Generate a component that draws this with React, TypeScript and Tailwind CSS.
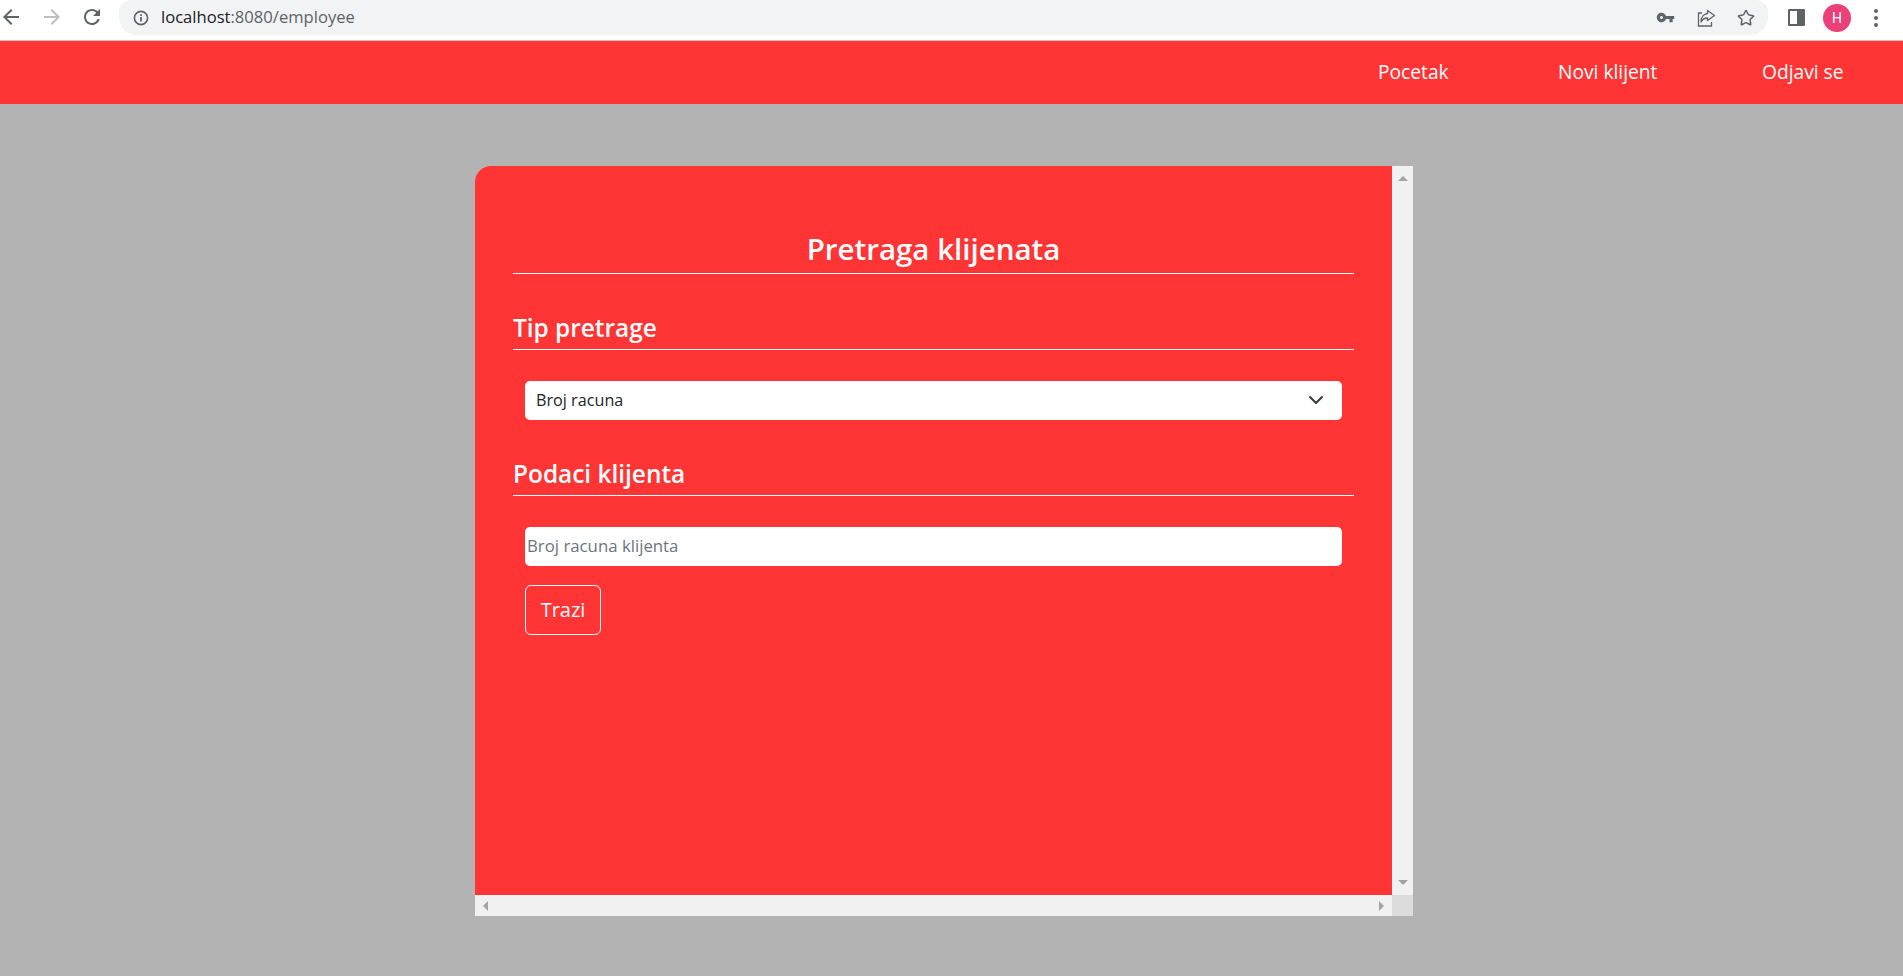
import { Star } from 'lucide-react';

const segoe = 'font-["Open_Sans","Noto_Sans",sans-serif]';

function Mat({ d, className }: { d: string; className: string }) {
  return (
    <svg viewBox="0 0 24 24" className={className} fill="currentColor">
      <path d={d} />
    </svg>
  );
}

function BrowserBar() {
  return (
    <div className="flex h-[41px] items-start border-b border-[#c4c4c4] bg-white">
      <Mat
        d="M20 11H7.83l5.59-5.59L12 4l-8 8 8 8 1.41-1.41L7.83 13H20v-2z"
        className="ml-[-1px] mt-[5px] h-6 w-6 shrink-0 text-[#5f6368]"
      />
      <Mat
        d="M4 11h12.17l-5.59-5.59L12 4l8 8-8 8-1.41-1.41L16.17 13H4v-2z"
        className="ml-[17px] mt-[5px] h-6 w-6 shrink-0 text-[#bcbec1]"
      />
      <Mat
        d="M17.65 6.35C16.2 4.9 14.21 4 12 4c-4.42 0-7.99 3.58-7.99 8s3.57 8 7.99 8c3.73 0 6.84-2.55 7.73-6h-2.08c-.82 2.33-3.04 4-5.65 4-3.31 0-6-2.69-6-6s2.69-6 6-6c1.66 0 3.14.69 4.22 1.78L13 11h7V4l-2.35 2.35z"
        className="ml-[16px] mt-[5px] h-6 w-6 shrink-0 text-[#5f6368]"
      />
      <div className="ml-[15px] flex h-[35px] w-[1649px] shrink-0 items-center rounded-b-[18px] rounded-t-[12px] bg-[#f1f3f4]">
        <svg viewBox="0 0 16 16" className="ml-[14px] h-4 w-4 shrink-0 text-[#5f6368]" fill="none" stroke="currentColor">
          <circle cx="8" cy="8" r="6.6" strokeWidth="1.6" />
          <path d="M8 7v4.5" strokeWidth="1.8" />
          <path d="M8 4.2v1.7" strokeWidth="1.8" />
        </svg>
        <span className={`ml-[12px] text-[16.6px] leading-none text-[#202124] ${segoe}`}>
          localhost<span className="text-[#5f6368]">:8080/employee</span>
        </span>
        <Mat
          d="M12.65 10C11.83 7.67 9.61 6 7 6c-3.31 0-6 2.69-6 6s2.69 6 6 6c2.61 0 4.83-1.67 5.65-4H17v4h4v-4h2v-4H12.65zM7 14c-1.1 0-2-.9-2-2s.9-2 2-2 2 .9 2 2-.9 2-2 2z"
          className="ml-auto h-[19px] w-[19px] shrink-0 text-[#5f6368]"
        />
        <svg viewBox="0 0 20 20" className="ml-[21px] h-5 w-5 shrink-0 text-[#5f6368]" fill="none" stroke="currentColor" strokeWidth="1.3">
          <path d="M6 5H2.5v13h13v-4" />
          <path d="M11.5 2.5 18.5 7.5 11.5 12.5V10C8.5 10 6.5 11 5 14 5 9.5 7.5 6 11.5 5.5z" strokeLinejoin="round" />
        </svg>
        <Star className="ml-[21px] mr-[13px] h-[18px] w-[18px] shrink-0 text-[#5f6368]" strokeWidth={2} />
      </div>
      <div className="ml-[20px] mt-[9px] flex h-[17px] w-[17px] shrink-0 rounded-[1px] border-2 border-[#5f6368]">
        <div className="w-1/2 grow bg-white" />
        <div className="w-[6px] bg-[#5f6368]" />
      </div>
      <div className="ml-[18px] mt-[4px] flex h-[28px] w-[28px] shrink-0 items-center justify-center rounded-full bg-[#ec407a] font-['Roboto',sans-serif] text-[14px] text-white">
        H
      </div>
      <div className="ml-[23px] mt-[9px] flex shrink-0 flex-col gap-[3px]">
        <div className="h-[4px] w-[4px] rounded-full bg-[#5f6368]" />
        <div className="h-[4px] w-[4px] rounded-full bg-[#5f6368]" />
        <div className="h-[4px] w-[4px] rounded-full bg-[#5f6368]" />
      </div>
    </div>
  );
}

function NavBar() {
  return (
    <nav className={`flex h-[63px] shrink-0 items-center bg-[#ff3434] text-[19.2px] text-white ${segoe}`}>
      <a className="ml-[1378px] w-[180px]">Pocetak</a>
      <a className="w-[204px]">Novi klijent</a>
      <a>Odjavi se</a>
    </nav>
  );
}

function Arrow({ points, className }: { points: string; className: string }) {
  return (
    <svg viewBox="0 0 10 10" className={`h-[10px] w-[10px] text-[#a3a3a3] ${className}`} fill="currentColor">
      <polygon points={points} />
    </svg>
  );
}

function SearchPanel() {
  return (
    <div className="ml-[475px] flex h-[750px] w-[938px] flex-col">
      <div className="flex min-h-0 flex-1">
        <div className={`flex-1 rounded-tl-[16px] bg-[#ff3434] px-[38px] pt-[59px] text-white ${segoe}`}>
          <h1 className="h-[49px] border-b border-white text-center text-[29.5px] font-semibold leading-[48px]">
            Pretraga klijenata
          </h1>
          <h2 className="mt-[35px] h-[41px] border-b border-white text-[24.4px] font-semibold leading-[38px]">
            Tip pretrage
          </h2>
          <div className="relative mx-[12px] mt-[31px]">
            <select className="h-[39px] w-full appearance-none rounded-[5px] bg-white pb-[1px] pl-[11px] text-[16.2px] text-[#212529] outline-none">
              <option>Broj racuna</option>
            </select>
            <svg
              viewBox="0 0 16 16"
              className="pointer-events-none absolute right-[18px] top-[11px] h-4 w-4"
              fill="none"
              stroke="#343a40"
              strokeWidth="2"
              strokeLinecap="round"
              strokeLinejoin="round"
            >
              <path d="m2 5 6 6 6-6" />
            </svg>
          </div>
          <h2 className="mt-[35px] h-[41px] border-b border-white text-[24.4px] font-semibold leading-[38px]">
            Podaci klijenta
          </h2>
          <div className="mx-[12px] mt-[31px]">
            <input
              placeholder="Broj racuna klijenta"
              className="block h-[39px] w-full rounded-[5px] bg-white pb-[2px] pl-[2px] text-[16.8px] text-[#212529] outline-none placeholder:text-[#6c757d]"
            />
            <button className="mt-[19px] h-[50px] w-[76px] rounded-[6px] border border-white text-[20px] text-white">
              Trazi
            </button>
          </div>
        </div>
        <div className="flex w-[21px] flex-col items-center justify-between bg-[#f1f1f1] pb-[7px] pt-[7px]">
          <Arrow points="0,8 5,3 10,8" className="" />
          <Arrow points="0,2 10,2 5,7" className="" />
        </div>
      </div>
      <div className="flex h-[21px] shrink-0">
        <div className="flex flex-1 items-center justify-between bg-[#f1f1f1] px-[6px]">
          <Arrow points="7,0 7,10 2,5" className="" />
          <Arrow points="3,0 3,10 8,5" className="" />
        </div>
        <div className="w-[21px] bg-[#dcdcdc]" />
      </div>
    </div>
  );
}

export default function App() {
  return (
    <div className="flex h-[976px] flex-col overflow-hidden bg-[#b3b3b3]">
      <BrowserBar />
      <NavBar />
      <main className="pt-[62px]">
        <SearchPanel />
      </main>
    </div>
  );
}
